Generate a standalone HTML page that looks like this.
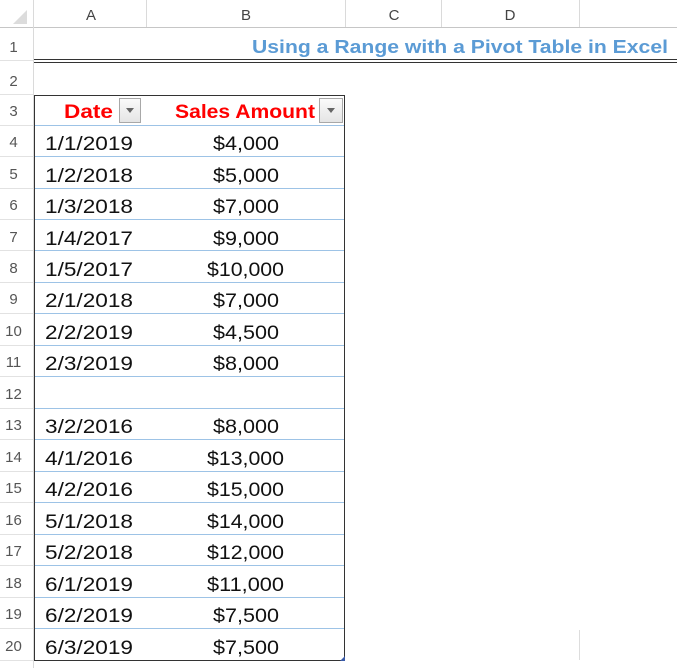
<!DOCTYPE html>
<html><head><meta charset="utf-8"><style>
html,body{margin:0;padding:0;background:#fff;}
svg{display:block;}
text{font-family:"Liberation Sans",Arial,sans-serif;}
</style></head><body>
<svg width="677" height="668" viewBox="0 0 677 668" xmlns="http://www.w3.org/2000/svg">
<rect width="677" height="668" fill="#fff"/>
<!-- column header -->
<rect x="0" y="0" width="677" height="28" fill="#fff"/>
<line x1="0" y1="27.5" x2="677" y2="27.5" stroke="#c6c6c6"/>
<g stroke="#dadada">
<line x1="33.5" y1="0" x2="33.5" y2="668"/>
<line x1="146.5" y1="0" x2="146.5" y2="27"/>
<line x1="345.5" y1="0" x2="345.5" y2="27"/>
<line x1="441.5" y1="0" x2="441.5" y2="27"/>
<line x1="579.5" y1="0" x2="579.5" y2="27"/>
</g>
<polygon points="27,10 27,24 13,24" fill="#dcdcdc"/>
<g font-size="15" fill="#444" text-anchor="middle">
<text x="91" y="20">A</text><text x="246" y="20">B</text><text x="394" y="20">C</text><text x="510" y="20">D</text>
</g>
<!-- row header lines -->
<g stroke="#e2e2e2">
<line x1="0" y1="60.5" x2="33" y2="60.5"/><line x1="0" y1="94.5" x2="33" y2="94.5"/>
<line x1="0" y1="125.5" x2="33" y2="125.5"/>
</g>
<!-- title -->
<text x="252" y="53" font-size="18" font-weight="bold" fill="#5b9bd5" textLength="416" lengthAdjust="spacingAndGlyphs">Using a Range with a Pivot Table in Excel</text>
<line x1="34" y1="59.5" x2="677" y2="59.5" stroke="#333"/>
<line x1="34" y1="62.5" x2="677" y2="62.5" stroke="#333"/>
<!-- table -->
<g stroke="#9dc3e6">
<line x1="34" y1="125.5" x2="344" y2="125.5"/>
<line x1="34" y1="156.5" x2="344" y2="156.5"/>
<line x1="34" y1="188.5" x2="344" y2="188.5"/>
<line x1="34" y1="219.5" x2="344" y2="219.5"/>
<line x1="34" y1="250.5" x2="344" y2="250.5"/>
<line x1="34" y1="282.5" x2="344" y2="282.5"/>
<line x1="34" y1="313.5" x2="344" y2="313.5"/>
<line x1="34" y1="345.5" x2="344" y2="345.5"/>
<line x1="34" y1="376.5" x2="344" y2="376.5"/>
<line x1="34" y1="408.5" x2="344" y2="408.5"/>
<line x1="34" y1="439.5" x2="344" y2="439.5"/>
<line x1="34" y1="471.5" x2="344" y2="471.5"/>
<line x1="34" y1="502.5" x2="344" y2="502.5"/>
<line x1="34" y1="534.5" x2="344" y2="534.5"/>
<line x1="34" y1="565.5" x2="344" y2="565.5"/>
<line x1="34" y1="597.5" x2="344" y2="597.5"/>
<line x1="34" y1="628.5" x2="344" y2="628.5"/>
</g>
<g stroke="#e2e2e2">
<line x1="0" y1="156.5" x2="33" y2="156.5"/><line x1="0" y1="188.5" x2="33" y2="188.5"/>
<line x1="0" y1="219.5" x2="33" y2="219.5"/><line x1="0" y1="250.5" x2="33" y2="250.5"/>
<line x1="0" y1="282.5" x2="33" y2="282.5"/><line x1="0" y1="313.5" x2="33" y2="313.5"/>
<line x1="0" y1="345.5" x2="33" y2="345.5"/><line x1="0" y1="376.5" x2="33" y2="376.5"/>
<line x1="0" y1="408.5" x2="33" y2="408.5"/><line x1="0" y1="439.5" x2="33" y2="439.5"/>
<line x1="0" y1="471.5" x2="33" y2="471.5"/><line x1="0" y1="502.5" x2="33" y2="502.5"/>
<line x1="0" y1="534.5" x2="33" y2="534.5"/><line x1="0" y1="565.5" x2="33" y2="565.5"/>
<line x1="0" y1="597.5" x2="33" y2="597.5"/><line x1="0" y1="628.5" x2="33" y2="628.5"/>
<line x1="0" y1="660.5" x2="33" y2="660.5"/>
</g>
<rect x="34.5" y="95.5" width="310" height="565" fill="none" stroke="#333"/>
<polygon points="345,656 345,661 340,661" fill="#3a5ba8"/>
<line x1="579.5" y1="630" x2="579.5" y2="660" stroke="#ddd"/>
<!-- headers -->
<g font-size="19" font-weight="bold" fill="#ff0000">
<text x="64" y="118" textLength="49" lengthAdjust="spacingAndGlyphs">Date</text>
<text x="175" y="118" textLength="140" lengthAdjust="spacingAndGlyphs">Sales Amount</text>
</g>
<defs><linearGradient id="g" x1="0" y1="0" x2="0" y2="1"><stop offset="0" stop-color="#fbfbfb"/><stop offset="1" stop-color="#e4e4e4"/></linearGradient></defs>
<rect x="119.5" y="98.5" width="21" height="24" fill="url(#g)" stroke="#a8a8a8"/>
<polygon points="126,108 134,108 130,113" fill="#666"/>
<rect x="319.5" y="98.5" width="23" height="24" fill="url(#g)" stroke="#a8a8a8"/>
<polygon points="327,108 335,108 331,113" fill="#666"/>
<!-- row numbers -->
<g font-size="15" fill="#555" text-anchor="middle">
<text x="13.5" y="52">1</text><text x="13.5" y="86">2</text><text x="13.5" y="116">3</text>
<text x="13.5" y="147">4</text><text x="13.5" y="179">5</text><text x="13.5" y="210">6</text>
<text x="13.5" y="242">7</text><text x="13.5" y="273">8</text><text x="13.5" y="304">9</text>
<text x="13.5" y="336">10</text><text x="13.5" y="367">11</text><text x="13.5" y="399">12</text>
<text x="13.5" y="430">13</text><text x="13.5" y="462">14</text><text x="13.5" y="493">15</text>
<text x="13.5" y="525">16</text><text x="13.5" y="556">17</text><text x="13.5" y="588">18</text>
<text x="13.5" y="619">19</text><text x="13.5" y="651">20</text>
</g>
<!-- data -->
<g font-size="19" fill="#111">
<text x="45" y="150" textLength="88" lengthAdjust="spacingAndGlyphs">1/1/2019</text>
<text x="45" y="182" textLength="88" lengthAdjust="spacingAndGlyphs">1/2/2018</text>
<text x="45" y="213" textLength="88" lengthAdjust="spacingAndGlyphs">1/3/2018</text>
<text x="45" y="245" textLength="88" lengthAdjust="spacingAndGlyphs">1/4/2017</text>
<text x="45" y="276" textLength="88" lengthAdjust="spacingAndGlyphs">1/5/2017</text>
<text x="45" y="307" textLength="88" lengthAdjust="spacingAndGlyphs">2/1/2018</text>
<text x="45" y="339" textLength="88" lengthAdjust="spacingAndGlyphs">2/2/2019</text>
<text x="45" y="370" textLength="88" lengthAdjust="spacingAndGlyphs">2/3/2019</text>
<text x="45" y="433" textLength="88" lengthAdjust="spacingAndGlyphs">3/2/2016</text>
<text x="45" y="465" textLength="88" lengthAdjust="spacingAndGlyphs">4/1/2016</text>
<text x="45" y="496" textLength="88" lengthAdjust="spacingAndGlyphs">4/2/2016</text>
<text x="45" y="528" textLength="88" lengthAdjust="spacingAndGlyphs">5/1/2018</text>
<text x="45" y="559" textLength="88" lengthAdjust="spacingAndGlyphs">5/2/2018</text>
<text x="45" y="591" textLength="88" lengthAdjust="spacingAndGlyphs">6/1/2019</text>
<text x="45" y="622" textLength="88" lengthAdjust="spacingAndGlyphs">6/2/2019</text>
<text x="45" y="654" textLength="88" lengthAdjust="spacingAndGlyphs">6/3/2019</text>
</g>
<g font-size="19" fill="#111">
<text x="213" y="150" textLength="66" lengthAdjust="spacingAndGlyphs">$4,000</text>
<text x="213" y="182" textLength="66" lengthAdjust="spacingAndGlyphs">$5,000</text>
<text x="213" y="213" textLength="66" lengthAdjust="spacingAndGlyphs">$7,000</text>
<text x="213" y="245" textLength="66" lengthAdjust="spacingAndGlyphs">$9,000</text>
<text x="207" y="276" textLength="77" lengthAdjust="spacingAndGlyphs">$10,000</text>
<text x="213" y="307" textLength="66" lengthAdjust="spacingAndGlyphs">$7,000</text>
<text x="213" y="339" textLength="66" lengthAdjust="spacingAndGlyphs">$4,500</text>
<text x="213" y="370" textLength="66" lengthAdjust="spacingAndGlyphs">$8,000</text>
<text x="213" y="433" textLength="66" lengthAdjust="spacingAndGlyphs">$8,000</text>
<text x="207" y="465" textLength="77" lengthAdjust="spacingAndGlyphs">$13,000</text>
<text x="207" y="496" textLength="77" lengthAdjust="spacingAndGlyphs">$15,000</text>
<text x="207" y="528" textLength="77" lengthAdjust="spacingAndGlyphs">$14,000</text>
<text x="207" y="559" textLength="77" lengthAdjust="spacingAndGlyphs">$12,000</text>
<text x="207" y="591" textLength="77" lengthAdjust="spacingAndGlyphs">$11,000</text>
<text x="213" y="622" textLength="66" lengthAdjust="spacingAndGlyphs">$7,500</text>
<text x="213" y="654" textLength="66" lengthAdjust="spacingAndGlyphs">$7,500</text>
</g>
</svg>
</body></html>
